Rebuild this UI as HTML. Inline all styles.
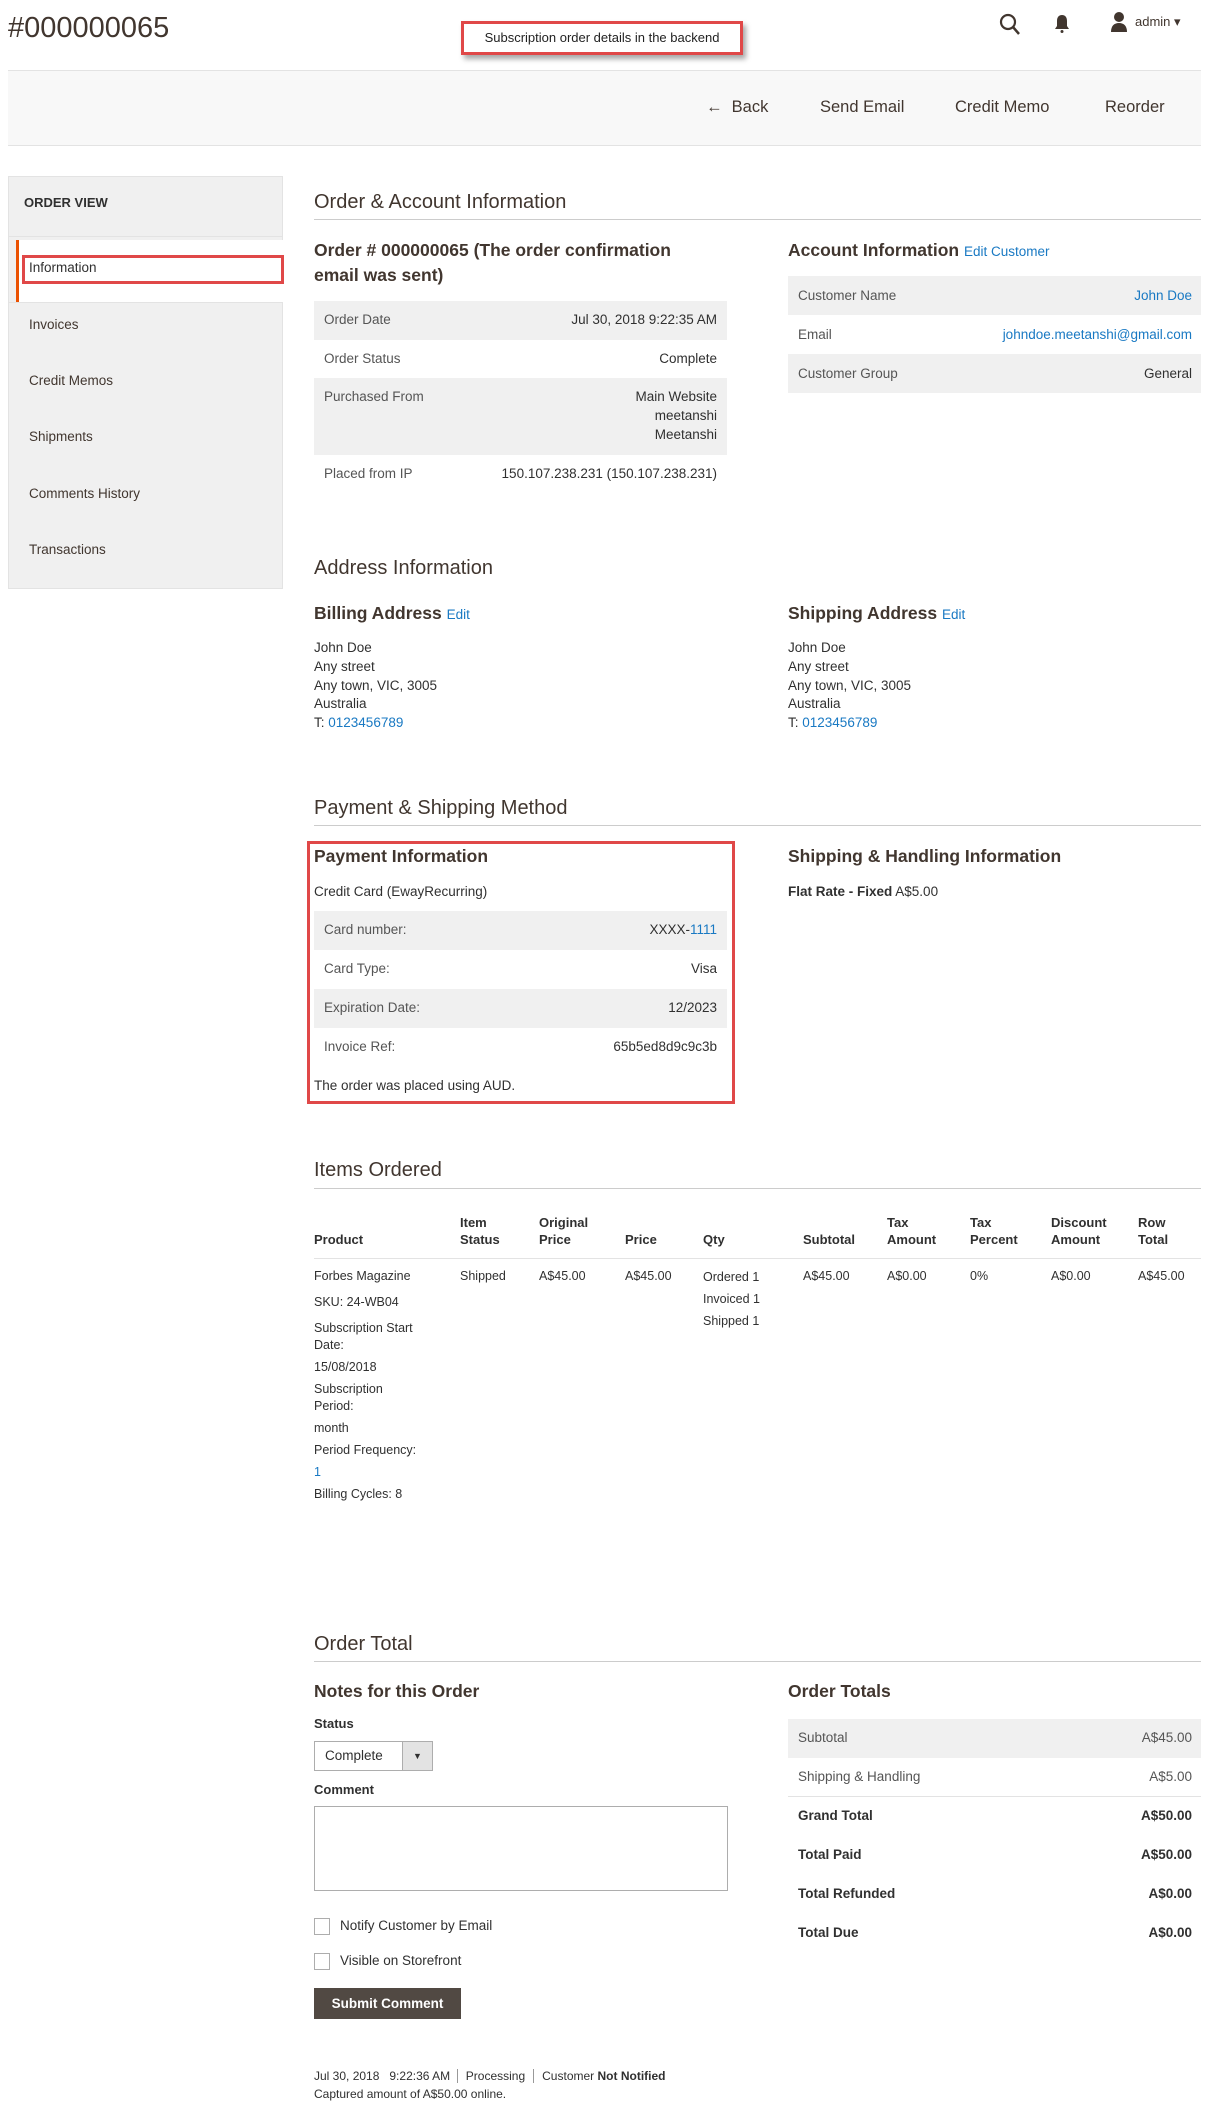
<!DOCTYPE html>
<html><head><meta charset="utf-8"><style>
*{margin:0;padding:0;box-sizing:border-box}
body{width:1212px;height:2117px;position:relative;background:#fff;font-family:"Liberation Sans",sans-serif;color:#303030;font-size:13.5px;overflow:hidden}
.a{position:absolute;white-space:nowrap;line-height:20px}
.h2{font-size:20px;color:#41362f;line-height:26px}
.h3{font-size:17.5px;font-weight:bold;color:#41362f;line-height:24px}
.line{position:absolute;height:1px;background:#ccc}
.g{position:absolute;background:#f0f0f0}
.lnk{color:#1979c3}
.lbl{color:#555}
.b{font-weight:bold}
.th{font-weight:bold;font-size:13px;line-height:17px;position:absolute;white-space:nowrap;color:#303030}
</style></head><body>

<div class="a" style="left:8px;top:10px;font-size:29px;line-height:36px;color:#41362f">#000000065</div>
<div class="a" style="left:461px;top:21px;width:282px;height:34px;border:3px solid #e04848;box-shadow:3px 4px 5px rgba(0,0,0,.35);font-size:13px;line-height:28px;text-align:center;color:#222">Subscription order details in the backend</div>
<svg class="a" style="left:998px;top:12px" width="24" height="24" viewBox="0 0 24 24"><circle cx="10" cy="10" r="7" fill="none" stroke="#41362f" stroke-width="2.2"/><path d="M15 15l6 7" stroke="#41362f" stroke-width="2.5"/></svg>
<svg class="a" style="left:1054px;top:14px" width="16" height="20" viewBox="0 0 16 20"><path d="M8 1c-3 0-5 2-5 6v5l-2 3h14l-2-3V7c0-4-2-6-5-6z" fill="#41362f"/><circle cx="8" cy="17.5" r="1.5" fill="#41362f"/></svg>
<svg class="a" style="left:1110px;top:11px" width="18" height="22" viewBox="0 0 18 22"><circle cx="9" cy="6" r="5" fill="#41362f"/><path d="M1 21c0-6 3-9 8-9s8 3 8 9z" fill="#41362f"/></svg>
<div class="a" style="left:1135px;top:12px;font-size:13px;color:#41362f">admin &#9662;</div>

<div class="line" style="left:8px;top:70px;width:1193px;background:#e3e3e3"></div>
<div class="g" style="left:8px;top:71px;width:1193px;height:75px;background:#f8f8f8;border-bottom:1px solid #e3e3e3"></div>
<div class="a" style="left:706px;top:96px;font-size:16.5px;line-height:22px;color:#41362f">&#8592;&nbsp; Back</div>
<div class="a" style="left:820px;top:96px;font-size:16.5px;line-height:22px;color:#41362f">Send Email</div>
<div class="a" style="left:955px;top:96px;font-size:16.5px;line-height:22px;color:#41362f">Credit Memo</div>
<div class="a" style="left:1105px;top:96px;font-size:16.5px;line-height:22px;color:#41362f">Reorder</div>

<!-- sidebar -->
<div class="g" style="left:8px;top:176px;width:275px;height:413px;border:1px solid #e3e3e3"></div>
<div class="line" style="left:9px;top:236px;width:274px;background:#e3e3e3"></div>
<div class="a b" style="left:24px;top:193px;font-size:13px;color:#303030">ORDER VIEW</div>
<div style="position:absolute;left:16px;top:240px;width:267px;height:62px;background:#fff;border-left:3px solid #eb5202"></div>
<div style="position:absolute;left:22px;top:255px;width:262px;height:29px;border:3px solid #e04848"></div>
<div class="a" style="left:29px;top:258px">Information</div>
<div class="line" style="left:9px;top:302px;width:274px;background:#e3e3e3"></div>
<div class="a" style="left:29px;top:315px;color:#41362f">Invoices</div>
<div class="a" style="left:29px;top:371px;color:#41362f">Credit Memos</div>
<div class="a" style="left:29px;top:427px;color:#41362f">Shipments</div>
<div class="a" style="left:29px;top:484px;color:#41362f">Comments History</div>
<div class="a" style="left:29px;top:540px;color:#41362f">Transactions</div>

<!-- order & account -->
<div class="a h2" style="left:314px;top:189px">Order &amp; Account Information</div>
<div class="line" style="left:314px;top:219px;width:887px"></div>
<div class="a h3" style="left:314px;top:238px;line-height:25px">Order # 000000065 (The order confirmation<br>email was sent)</div>
<div class="g" style="left:314px;top:301px;width:413px;height:39px"></div>
<div class="a lbl" style="left:324px;top:310px">Order Date</div><div class="a" style="right:495px;top:310px">Jul 30, 2018 9:22:35 AM</div>
<div class="a lbl" style="left:324px;top:349px">Order Status</div><div class="a" style="right:495px;top:349px">Complete</div>
<div class="g" style="left:314px;top:378px;width:413px;height:77px"></div>
<div class="a lbl" style="left:324px;top:387px">Purchased From</div><div class="a" style="right:495px;top:387px;text-align:right;line-height:19px">Main Website<br>meetanshi<br>Meetanshi</div>
<div class="a lbl" style="left:324px;top:464px">Placed from IP</div><div class="a" style="right:495px;top:464px">150.107.238.231 (150.107.238.231)</div>

<div class="a h3" style="left:788px;top:238px">Account Information <span class="lnk" style="font-size:13.5px;font-weight:normal">Edit Customer</span></div>
<div class="g" style="left:788px;top:276px;width:413px;height:39px"></div>
<div class="a lbl" style="left:798px;top:286px">Customer Name</div><div class="a lnk" style="right:20px;top:286px">John Doe</div>
<div class="a lbl" style="left:798px;top:325px">Email</div><div class="a lnk" style="right:20px;top:325px">johndoe.meetanshi@gmail.com</div>
<div class="g" style="left:788px;top:354px;width:413px;height:39px"></div>
<div class="a lbl" style="left:798px;top:364px">Customer Group</div><div class="a" style="right:20px;top:364px">General</div>

<!-- address -->
<div class="a h2" style="left:314px;top:555px">Address Information</div>
<div class="a h3" style="left:314px;top:601px">Billing Address <span class="lnk" style="font-size:13.5px;font-weight:normal">Edit</span></div>
<div class="a" style="left:314px;top:639px;line-height:18.8px">John Doe<br>Any street<br>Any town, VIC, 3005<br>Australia<br>T: <span class="lnk">0123456789</span></div>
<div class="a h3" style="left:788px;top:601px">Shipping Address <span class="lnk" style="font-size:13.5px;font-weight:normal">Edit</span></div>
<div class="a" style="left:788px;top:639px;line-height:18.8px">John Doe<br>Any street<br>Any town, VIC, 3005<br>Australia<br>T: <span class="lnk">0123456789</span></div>

<!-- payment -->
<div class="a h2" style="left:314px;top:795px">Payment &amp; Shipping Method</div>
<div class="line" style="left:314px;top:825px;width:887px"></div>
<div style="position:absolute;left:307px;top:841px;width:428px;height:263px;border:3px solid #e04848"></div>
<div class="a h3" style="left:314px;top:844px">Payment Information</div>
<div class="a" style="left:314px;top:882px">Credit Card (EwayRecurring)</div>
<div class="g" style="left:314px;top:911px;width:413px;height:39px"></div>
<div class="a lbl" style="left:324px;top:920px">Card number:</div><div class="a" style="right:495px;top:920px">XXXX-<span class="lnk">1111</span></div>
<div class="a lbl" style="left:324px;top:959px">Card Type:</div><div class="a" style="right:495px;top:959px">Visa</div>
<div class="g" style="left:314px;top:989px;width:413px;height:39px"></div>
<div class="a lbl" style="left:324px;top:998px">Expiration Date:</div><div class="a" style="right:495px;top:998px">12/2023</div>
<div class="a lbl" style="left:324px;top:1037px">Invoice Ref:</div><div class="a" style="right:495px;top:1037px">65b5ed8d9c9c3b</div>
<div class="a" style="left:314px;top:1076px">The order was placed using AUD.</div>
<div class="a h3" style="left:788px;top:844px">Shipping &amp; Handling Information</div>
<div class="a" style="left:788px;top:882px"><b>Flat Rate - Fixed</b> A$5.00</div>

<!-- items -->
<div class="a h2" style="left:314px;top:1157px">Items Ordered</div>
<div class="line" style="left:314px;top:1188px;width:887px"></div>
<div class="th" style="left:314px;top:1231px">Product</div>
<div class="th" style="left:460px;top:1214px">Item<br>Status</div>
<div class="th" style="left:539px;top:1214px">Original<br>Price</div>
<div class="th" style="left:625px;top:1231px">Price</div>
<div class="th" style="left:703px;top:1231px">Qty</div>
<div class="th" style="left:803px;top:1231px">Subtotal</div>
<div class="th" style="left:887px;top:1214px">Tax<br>Amount</div>
<div class="th" style="left:970px;top:1214px">Tax<br>Percent</div>
<div class="th" style="left:1051px;top:1214px">Discount<br>Amount</div>
<div class="th" style="left:1138px;top:1214px">Row<br>Total</div>
<div class="line" style="left:314px;top:1258px;width:887px;background:#e3e3e3"></div>
<div style="position:absolute;left:314px;top:1268px;font-size:12.5px;line-height:17px;color:#303030">
<div>Forbes Magazine</div><div style="margin-top:9px">SKU: 24-WB04</div><div style="margin-top:9px">Subscription Start<br>Date:</div><div style="margin-top:5px">15/08/2018</div><div style="margin-top:5px">Subscription<br>Period:</div><div style="margin-top:5px">month</div><div style="margin-top:5px">Period Frequency:</div><div style="margin-top:5px" class="lnk">1</div><div style="margin-top:5px">Billing Cycles: 8</div></div>
<div class="a" style="left:460px;top:1268px;font-size:12.5px;line-height:17px">Shipped</div>
<div class="a" style="left:539px;top:1268px;font-size:12.5px;line-height:17px">A$45.00</div>
<div class="a" style="left:625px;top:1268px;font-size:12.5px;line-height:17px">A$45.00</div>
<div class="a" style="left:703px;top:1268px;font-size:12.5px;line-height:22px;margin-top:-2px">Ordered 1<br>Invoiced 1<br>Shipped 1</div>
<div class="a" style="left:803px;top:1268px;font-size:12.5px;line-height:17px">A$45.00</div>
<div class="a" style="left:887px;top:1268px;font-size:12.5px;line-height:17px">A$0.00</div>
<div class="a" style="left:970px;top:1268px;font-size:12.5px;line-height:17px">0%</div>
<div class="a" style="left:1051px;top:1268px;font-size:12.5px;line-height:17px">A$0.00</div>
<div class="a" style="left:1138px;top:1268px;font-size:12.5px;line-height:17px">A$45.00</div>

<!-- order total -->
<div class="a h2" style="left:314px;top:1631px">Order Total</div>
<div class="line" style="left:314px;top:1661px;width:887px"></div>
<div class="a h3" style="left:314px;top:1679px">Notes for this Order</div>
<div class="a b" style="left:314px;top:1714px;font-size:13px">Status</div>
<div style="position:absolute;left:314px;top:1741px;width:119px;height:30px;border:1px solid #adadad;background:#fff"></div>
<div style="position:absolute;left:402px;top:1742px;width:30px;height:28px;background:#e3e3e3;border-left:1px solid #adadad;font-size:9px;text-align:center;line-height:28px">&#9660;</div>
<div class="a" style="left:325px;top:1746px">Complete</div>
<div class="a b" style="left:314px;top:1780px;font-size:13px">Comment</div>
<div style="position:absolute;left:314px;top:1806px;width:414px;height:85px;border:1px solid #adadad"></div>
<div style="position:absolute;left:314px;top:1918px;width:16px;height:17px;border:1px solid #adadad"></div>
<div class="a" style="left:340px;top:1916px">Notify Customer by Email</div>
<div style="position:absolute;left:314px;top:1953px;width:16px;height:17px;border:1px solid #adadad"></div>
<div class="a" style="left:340px;top:1951px">Visible on Storefront</div>
<div style="position:absolute;left:314px;top:1988px;width:147px;height:31px;background:#514943;color:#fff;font-weight:bold;font-size:13.5px;line-height:31px;text-align:center">Submit Comment</div>
<div class="a" style="left:314px;top:2067px;font-size:12px;line-height:18px">Jul 30, 2018 &nbsp;&nbsp;9:22:36 AM &nbsp;<span style="border-left:1px solid #999;padding:0 8px">Processing</span><span style="border-left:1px solid #999;padding:0 8px">Customer <b>Not Notified</b></span></div>
<div class="a" style="left:314px;top:2085px;font-size:12px;line-height:18px">Captured amount of A$50.00 online.</div>

<div class="a h3" style="left:788px;top:1679px">Order Totals</div>
<div class="g" style="left:788px;top:1719px;width:413px;height:39px"></div>
<div class="a lbl" style="left:798px;top:1728px">Subtotal</div><div class="a lbl" style="right:20px;top:1728px">A$45.00</div>
<div class="a lbl" style="left:798px;top:1767px">Shipping &amp; Handling</div><div class="a lbl" style="right:20px;top:1767px">A$5.00</div>
<div class="line" style="left:788px;top:1796px;width:413px;background:#e3e3e3"></div>
<div class="a b" style="left:798px;top:1806px">Grand Total</div><div class="a b" style="right:20px;top:1806px">A$50.00</div>
<div class="a b" style="left:798px;top:1845px">Total Paid</div><div class="a b" style="right:20px;top:1845px">A$50.00</div>
<div class="a b" style="left:798px;top:1884px">Total Refunded</div><div class="a b" style="right:20px;top:1884px">A$0.00</div>
<div class="a b" style="left:798px;top:1923px">Total Due</div><div class="a b" style="right:20px;top:1923px">A$0.00</div>
</body></html>
